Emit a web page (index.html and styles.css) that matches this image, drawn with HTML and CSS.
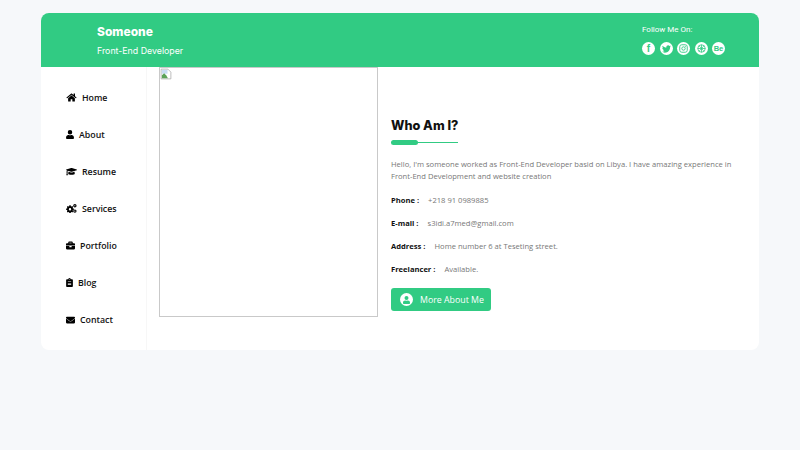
FILE: index.html
```html
<!DOCTYPE html>
<html lang="en">
<head>
    <meta charset="UTF-8">
    <meta name="viewport" content="width=device-width, initial-scale=1.0">
    <title>Someone</title>
    <link rel="stylesheet" href="styles.css">
</head>
<body>
    <div class="card">
        <header class="top">
            <div class="brand">
                <h1>Someone</h1>
                <p>Front-End Developer</p>
            </div>
            <div class="follow">
                <p>Follow Me On:</p>
                <div class="socials">
                    <span class="social">f</span>
                    <span class="social">
                        <svg width="9" height="8" viewBox="0 0 512 416"><path fill="#31cb83" d="M459 104c.3 4.500.3 9 .3 13.700C459.300 256 354 416 161 416 102 416 46 399 0 369c8 1 16 1 25 1 49 0 94-17 130-45-46-1-85-31-98-73 6 1 13 2 20 2 9 0 19-1 28-4C57 240 20 197 20 146v-1c14 8 30 13 47 13C39 139 21 107 21 71c0-20 5-38 14-53 52 64 129 105 216 110-2-8-3-16-3-24C248 47 295 0 352 0c30 0 57 13 76 33 24-5 46-13 66-26-8 25-24 46-45 58 21-2 41-8 60-16-14 21-32 40-50 55z"/></svg>
                    </span>
                    <span class="social">
                        <svg width="9" height="9" viewBox="0 0 18 18"><rect x="1.500" y="1.500" width="15" height="15" rx="4" fill="none" stroke="#31cb83" stroke-width="1.800"/><circle cx="9" cy="9" r="3.400" fill="none" stroke="#31cb83" stroke-width="1.800"/><circle cx="13.300" cy="4.700" r="1" fill="#31cb83"/></svg>
                    </span>
                    <span class="social">
                        <svg width="9" height="9" viewBox="0 0 18 18"><g fill="none" stroke="#31cb83" stroke-width="1.600"><circle cx="9" cy="9" r="7.500"/><path d="M1.500 9h15M9 1.500v15M4 3.500c3 2 7 9 10 11M14 3.500c-3 2-7 9-10 11"/></g></svg>
                    </span>
                    <span class="social social-be">Be</span>
                </div>
            </div>
        </header>
        <div class="main">
            <nav class="side">
                <a class="side-link" href="#">
                    <svg class="ico" width="11" height="9" viewBox="0 0 576 512"><path d="M280 148 96 300v164c0 9 7 16 16 16l112-.3c9 0 16-7 16-16V368c0-9 7-16 16-16h64c9 0 16 7 16 16v95.600c0 9 7 16 16 16l112 .4c9 0 16-7 16-16V300L296 148c-4-4-12-4-16 0zM572 251l-84-69V44c0-7-5-12-12-12h-56c-7 0-12 5-12 12v72l-90-74c-18-14-43-14-61 0L4 251c-5 4-6 12-2 17l26 31c4 5 12 6 17 2L280 107c4-4 12-4 16 0l235 194c5 4 13 3 17-2l26-31c4-5 3-13-2-17z"/></svg>
                    Home
                </a>
                <a class="side-link" href="#">
                    <svg class="ico" width="8" height="9" viewBox="0 0 448 512"><path d="M224 256a128 128 0 1 0 0-256 128 128 0 0 0 0 256zm90 32h-17a174 174 0 0 1-146 0h-17C60 288 0 348 0 422v42c0 27 21 48 48 48h352c27 0 48-21 48-48v-42c0-74-60-134-134-134z"/></svg>
                    About
                </a>
                <a class="side-link" href="#">
                    <svg class="ico" width="11" height="9" viewBox="0 0 640 512"><path d="M623 137 341 50a72 72 0 0 0-42 0L17 137c-23 7-23 37 0 44l49 15c-11 14-17 30-18 48-14 8-24 23-24 41 0 16 8 30 21 39L19 453c-2 10 5 19 15 19h60c10 0 17-9 15-19L83 324c13-9 21-23 21-39 0-17-9-32-23-40 1-15 9-28 21-36l197 61c9 3 27 6 42 0l282-87c23-7 23-38 0-45zM351 311c-29 9-53 4-62 0l-145-45-14 114c0 35 85 64 190 64s190-29 190-64l-14-114z"/></svg>
                    Resume
                </a>
                <a class="side-link" href="#">
                    <svg class="ico" width="11" height="9" viewBox="0 0 24 20"><path fill-rule="evenodd" d="M7.200 3h3l.4 2 1.300.6 1.800-1 2 2.100-1 1.800.5 1.300 2 .4v3l-2 .4-.5 1.300 1 1.800-2 2-1.800-1-1.300.6-.4 2h-3l-.4-2-1.300-.6-1.800 1-2-2 1-1.800-.5-1.300-2-.4v-3l2-.4.5-1.300-1-1.800 2-2.100 1.800 1 1.300-.6zm1.500 6a2.700 2.700 0 1 0 0 5.400 2.700 2.700 0 0 0 0-5.400z"/><path fill-rule="evenodd" d="M19.500 0a3.800 3.800 0 1 1 0 7.600 3.800 3.800 0 0 1 0-7.600zm0 2.500a1.300 1.300 0 1 0 0 2.600 1.300 1.300 0 0 0 0-2.600zM19.500 12a3.800 3.800 0 1 1 0 7.600 3.800 3.800 0 0 1 0-7.600zm0 2.500a1.300 1.300 0 1 0 0 2.600 1.300 1.300 0 0 0 0-2.600z"/></svg>
                    Services
                </a>
                <a class="side-link" href="#">
                    <svg class="ico" width="9" height="9" viewBox="0 0 512 512"><path d="M320 336c0 9-7 16-16 16h-96c-9 0-16-7-16-16v-48H0v144c0 26 22 48 48 48h416c26 0 48-22 48-48V288H320zm144-208h-80V80c0-26-22-48-48-48H176c-26 0-48 22-48 48v48H48c-26 0-48 22-48 48v80h512v-80c0-26-22-48-48-48zm-144 0H192V96h128z"/></svg>
                    Portfolio
                </a>
                <a class="side-link" href="#">
                    <svg class="ico" width="7" height="9" viewBox="0 0 384 512"><path fill-rule="evenodd" d="M336 64h-80a64 64 0 0 0-128 0H48C22 64 0 86 0 112v352c0 26 22 48 48 48h288c26 0 48-22 48-48V112c0-26-22-48-48-48zM192 40a24 24 0 1 1 0 48 24 24 0 0 1 0-48zM96 200h192v32H96zm0 80h192v32H96zm0 80h192v32H96z"/></svg>
                    Blog
                </a>
                <a class="side-link" href="#">
                    <svg class="ico" width="9" height="8" viewBox="0 0 512 384"><path d="M502 127c4-3 10 0 10 5v204c0 26-22 48-48 48H48c-26 0-48-22-48-48V132c0-5 6-8 10-5 22 17 52 39 154 113 21 15 57 48 92 48 36 0 72-33 92-48 102-74 132-96 154-113zM256 256c23 0 57-29 73-41 133-97 143-105 174-129 6-5 9-12 9-19V48c0-26-22-48-48-48H48C22 0 0 22 0 48v19c0 7 3 14 9 19 31 24 41 32 174 129 16 12 50 41 73 41z"/></svg>
                    Contact
                </a>
            </nav>
            <section class="about">
                <div class="photo">
                    <svg width="12" height="12" viewBox="0 0 16 16"><path fill="#fff" stroke="#a8a8a8" d="M1.500 1.500h9l4 4v9h-13z"/><path fill="#c8dcf4" d="M2.500 2.500h7.500v5H2.500z"/><path fill="#5da35a" d="M2.500 13.500v-4l3-2.500 3 3 2 3.500z"/></svg>
                </div>
                <div class="info">
                    <h2>Who Am I?</h2>
                    <div class="underline"><span></span></div>
                    <p class="intro">Hello, I'm someone worked as Front-End Developer basid on Libya. I have amazing experience in Front-End Development and website creation</p>
                    <p class="row"><b>Phone :</b><span>+218 91 0989885</span></p>
                    <p class="row"><b>E-mail :</b><span>s3idi.a7med@gmail.com</span></p>
                    <p class="row"><b>Address :</b><span>Home number 6 at Teseting street.</span></p>
                    <p class="row"><b>Freelancer :</b><span>Available.</span></p>
                    <a class="more" href="#">
                        <span class="more-ico">
                            <svg width="7" height="8" viewBox="0 0 448 512"><path fill="#31cb83" d="M224 256a128 128 0 1 0 0-256 128 128 0 0 0 0 256zm90 32h-17a174 174 0 0 1-146 0h-17C60 288 0 348 0 422v42c0 27 21 48 48 48h352c27 0 48-21 48-48v-42c0-74-60-134-134-134z"/></svg>
                        </span>
                        More About Me
                    </a>
                </div>
            </section>
        </div>
    </div>
</body>
</html>
```

FILE: styles.css
```css
* {
    box-sizing: border-box;
}
body {
    font-family: "Open Sans", sans-serif;
    margin: 0;
    padding: 13px 41px 0;
    background-color: #f6f8fa;
}
p, h1, h2 {
    margin: 0;
}
a {
    text-decoration: none;
}
.card {
    height: 337px;
    background-color: #fff;
    border-radius: 8px;
    overflow: hidden;
}
.top {
    height: 54px;
    display: flex;
    justify-content: space-between;
    background-color: #31cb83;
    color: #fff;
    padding: 11px 34px 0 56px;
}
.brand h1 {
    font-family: Inter, sans-serif;
    font-size: 12px;
    line-height: 16px;
    font-weight: 800;
}
.brand p {
    font-family: Inter, sans-serif;
    font-size: 8.800px;
    line-height: 12px;
    margin-top: 5px;
}
.follow {
    width: 83px;
}
.follow p {
    font-family: Roboto, sans-serif;
    font-size: 8px;
    line-height: 10px;
    margin-top: 1px;
    white-space: nowrap;
}
.socials {
    display: flex;
    gap: 4.500px;
    margin-top: 7px;
}
.social {
    width: 13px;
    height: 13px;
    border-radius: 50%;
    background-color: #fff;
    color: #31cb83;
    display: flex;
    align-items: center;
    justify-content: center;
    font-family: "Liberation Sans", sans-serif;
    font-size: 10px;
    font-weight: 700;
}
.social-be {
    font-size: 7.500px;
}
.main {
    display: flex;
    height: 283px;
}
.side {
    width: 106px;
    flex-shrink: 0;
    border-right: 1px solid #f7f7f7;
    padding: 12px 0 0 25px;
    display: flex;
    flex-direction: column;
}
.side-link {
    height: 37px;
    display: flex;
    align-items: center;
    gap: 5px;
    color: #111;
    font-size: 8.800px;
    font-weight: 600;
}
.about {
    flex: 1;
    display: flex;
    padding-left: 12px;
}
.photo {
    width: 219px;
    height: 250px;
    flex-shrink: 0;
    border: 1px solid #c9c9c9;
    line-height: 0;
}
.info {
    padding: 50px 0 0 13px;
}
.info h2 {
    font-family: Inter, sans-serif;
    font-size: 12.700px;
    line-height: 18px;
    font-weight: 800;
    color: #111;
}
.underline {
    width: 67px;
    height: 1px;
    margin: 7px 0 0;
    background-color: #31cb83;
    position: relative;
}
.underline span {
    position: absolute;
    left: 0;
    top: -2px;
    width: 27px;
    height: 5px;
    border-radius: 3px;
    background-color: #31cb83;
}
.intro {
    width: 342px;
    margin-top: 16px;
    font-size: 7.600px;
    line-height: 11.500px;
    color: #777;
}
.row {
    display: flex;
    gap: 9px;
    margin-top: 10px;
    font-size: 7.600px;
    line-height: 13px;
    color: #777;
}
.intro + .row {
    margin-top: 12px;
}
.row b {
    color: #111;
    font-weight: 700;
}
.more {
    display: flex;
    align-items: center;
    gap: 7px;
    height: 23px;
    width: 100px;
    margin-top: 12px;
    padding-left: 9px;
    border-radius: 3px;
    background-color: #31cb83;
    color: #fff;
    font-size: 8.800px;
}
.more-ico {
    width: 13px;
    height: 13px;
    border-radius: 50%;
    background-color: #fff;
    display: flex;
    align-items: center;
    justify-content: center;
}
```
